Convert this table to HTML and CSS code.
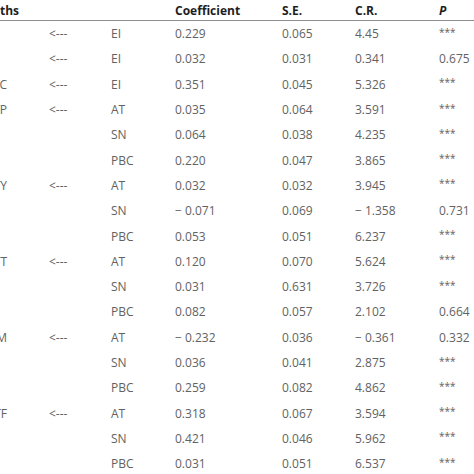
FILE: index.html
```html
<!DOCTYPE html>
<html>
<head>
<meta charset="utf-8">
<link rel="stylesheet" href="styles.css">
</head>
<body>
<div class="table">
  <div class="row head">
    <div class="c0 h0">Paths</div><div></div><div></div>
    <div>Coefficient</div><div>S.E.</div><div>C.R.</div><div class="it">P</div>
  </div>
  <div class="row"><div class="c0"></div><div>&lt;---</div><div>EI</div><div>0.229</div><div>0.065</div><div>4.45</div><div class="ast">***</div></div>
  <div class="row"><div class="c0"></div><div>&lt;---</div><div>EI</div><div>0.032</div><div>0.031</div><div>0.341</div><div>0.675</div></div>
  <div class="row"><div class="c0">PBC</div><div>&lt;---</div><div>EI</div><div>0.351</div><div>0.045</div><div>5.326</div><div class="ast">***</div></div>
  <div class="row"><div class="c0">INTP</div><div>&lt;---</div><div>AT</div><div>0.035</div><div>0.064</div><div>3.591</div><div class="ast">***</div></div>
  <div class="row"><div class="c0"></div><div></div><div>SN</div><div>0.064</div><div>0.038</div><div>4.235</div><div class="ast">***</div></div>
  <div class="row"><div class="c0"></div><div></div><div>PBC</div><div>0.220</div><div>0.047</div><div>3.865</div><div class="ast">***</div></div>
  <div class="row"><div class="c0">INTY</div><div>&lt;---</div><div>AT</div><div>0.032</div><div>0.032</div><div>3.945</div><div class="ast">***</div></div>
  <div class="row"><div class="c0"></div><div></div><div>SN</div><div>− 0.071</div><div>0.069</div><div>− 1.358</div><div>0.731</div></div>
  <div class="row"><div class="c0"></div><div></div><div>PBC</div><div>0.053</div><div>0.051</div><div>6.237</div><div class="ast">***</div></div>
  <div class="row"><div class="c0">INTT</div><div>&lt;---</div><div>AT</div><div>0.120</div><div>0.070</div><div>5.624</div><div class="ast">***</div></div>
  <div class="row"><div class="c0"></div><div></div><div>SN</div><div>0.031</div><div>0.631</div><div>3.726</div><div class="ast">***</div></div>
  <div class="row"><div class="c0"></div><div></div><div>PBC</div><div>0.082</div><div>0.057</div><div>2.102</div><div>0.664</div></div>
  <div class="row"><div class="c0">INTM</div><div>&lt;---</div><div>AT</div><div>− 0.232</div><div>0.036</div><div>− 0.361</div><div>0.332</div></div>
  <div class="row"><div class="c0"></div><div></div><div>SN</div><div>0.036</div><div>0.041</div><div>2.875</div><div class="ast">***</div></div>
  <div class="row"><div class="c0"></div><div></div><div>PBC</div><div>0.259</div><div>0.082</div><div>4.862</div><div class="ast">***</div></div>
  <div class="row"><div class="c0">INTF</div><div>&lt;---</div><div>AT</div><div>0.318</div><div>0.067</div><div>3.594</div><div class="ast">***</div></div>
  <div class="row"><div class="c0"></div><div></div><div>SN</div><div>0.421</div><div>0.046</div><div>5.962</div><div class="ast">***</div></div>
  <div class="row"><div class="c0"></div><div></div><div>PBC</div><div>0.031</div><div>0.051</div><div>6.537</div><div class="ast">***</div></div>
</div>
</body>
</html>
```

FILE: styles.css
```css
html, body {
  margin: 0;
  padding: 0;
  background: #fff;
  overflow: hidden;
}
body {
  width: 474px;
  height: 474px;
  font-family: "Open Sans", "Noto Sans", sans-serif;
  font-size: 12px;
  color: #626262;
}
.table {
  display: flex;
  flex-direction: column;
}
.row {
  display: grid;
  grid-template-columns: 49px 62px 64px 107px 73px 84px 35px;
  height: 25.3px;
  align-items: center;
  white-space: nowrap;
}
.row > div {
  display: flex;
  align-items: center;
}
.row.head {
  height: 20px;
  border-bottom: 1px solid #8f8f8f;
  color: #1e1e1e;
  font-weight: 700;
  font-size: 12px;
}
.c0 {
  justify-content: flex-end;
  padding-right: 42px;
}
.c0.h0 {
  padding-right: 30px;
}
.it {
  font-style: italic;
}
.ast {
  font-size: 10px;
  padding-bottom: 4px;
}
```
